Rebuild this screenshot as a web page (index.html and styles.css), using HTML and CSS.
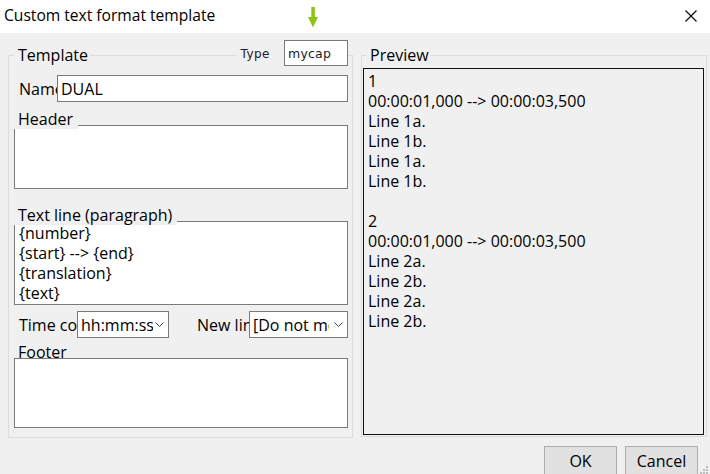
FILE: index.html
```html
<!DOCTYPE html>
<html>
<head>
<meta charset="utf-8">
<link rel="stylesheet" href="styles.css">
</head>
<body>
<div class="titlebar">
  <span class="title">Custom text format template</span>
  <svg class="marker" width="10" height="21" viewBox="0 0 10 21"><rect x="3.3" y="0" width="3.6" height="10.5" fill="#8cc414"/><polygon points="0,10 10,10 5,20.5" fill="#8cc414"/></svg>
  <svg class="close" width="12" height="12" viewBox="0 0 12 12"><path d="M0.5 0.5 L11.5 11.5 M11.5 0.5 L0.5 11.5" stroke="#000" stroke-width="1.1" fill="none"/></svg>
</div>
<div class="main">
  <div class="group left">
    <div class="group-head">
      <span class="legend">Template</span>
      <span class="type-label">Type</span>
      <div class="field type-field">mycap</div>
    </div>
    <div class="name-row">
      <span class="clip-label name-label">Name</span>
      <div class="field name-field">DUAL</div>
    </div>
    <div class="box-label header-label">Header</div>
    <div class="box header-box"></div>
    <div class="box-label textline-label">Text line (paragraph)</div>
    <div class="box textline-box">
      <div>{number}</div>
      <div>{start} --&gt; {end}</div>
      <div>{translation}</div>
      <div>{text}</div>
    </div>
    <div class="combo-row">
      <span class="clip-label time-label">Time code</span>
      <div class="combo time-combo"><span class="combo-text">hh:mm:ss,zzz</span><svg class="chev" width="9" height="5" viewBox="0 0 9 5"><path d="M0.5 0.5 L4.5 4.5 L8.5 0.5" stroke="#444" stroke-width="1" fill="none"/></svg></div>
      <span class="clip-label nl-label">New line</span>
      <div class="combo nl-combo"><span class="combo-text">[Do not modify]</span><svg class="chev" width="9" height="5" viewBox="0 0 9 5"><path d="M0.5 0.5 L4.5 4.5 L8.5 0.5" stroke="#444" stroke-width="1" fill="none"/></svg></div>
    </div>
    <div class="footer-label">Footer</div>
    <div class="box footer-box"></div>
  </div>
  <div class="group right">
    <div class="group-head">
      <span class="legend">Preview</span>
    </div>
    <div class="preview">
      <div>1</div>
      <div>00:00:01,000 --&gt; 00:00:03,500</div>
      <div>Line 1a.</div>
      <div>Line 1b.</div>
      <div>Line 1a.</div>
      <div>Line 1b.</div>
      <div>&nbsp;</div>
      <div>2</div>
      <div>00:00:01,000 --&gt; 00:00:03,500</div>
      <div>Line 2a.</div>
      <div>Line 2b.</div>
      <div>Line 2a.</div>
      <div>Line 2b.</div>
    </div>
  </div>
</div>
<div class="buttons">
  <button class="btn">OK</button>
  <button class="btn">Cancel</button>
</div>
<svg class="grip" width="9" height="9" viewBox="0 0 9 9"><rect x="6" y="1" width="2" height="2" fill="#bcbcbc"/><rect x="3" y="4" width="2" height="2" fill="#bcbcbc"/><rect x="6" y="4" width="2" height="2" fill="#bcbcbc"/><rect x="0" y="7" width="2" height="2" fill="#bcbcbc"/><rect x="3" y="7" width="2" height="2" fill="#bcbcbc"/><rect x="6" y="7" width="2" height="2" fill="#bcbcbc"/></svg>
</body>
</html>
```
FILE: styles.css
```css
* { box-sizing: border-box; }
html, body { margin: 0; padding: 0; }
body {
  width: 710px;
  height: 474px;
  overflow: hidden;
  position: relative;
  background: #f0f0f0;
  font-family: "Open Sans", "Noto Sans", sans-serif;
  font-size: 16px;
  color: #000;
}
.titlebar {
  height: 33px;
  background: #fff;
  display: flex;
  align-items: center;
  padding: 0 13px 0 4px;
  position: relative;
}
.title { font-size: 15.6px; line-height: 20px; margin-top: -3px; }
.marker { position: absolute; left: 308px; top: 7px; }
.close { margin-left: auto; margin-top: -1px; }

.main {
  display: flex;
  gap: 8px;
  padding: 22px 0 0 8px;
}
.group { border: 1px solid #dcdcdc; }
.left {
  width: 345px;
  height: 383px;
  padding: 0 4px 0 5px;
}
.right {
  width: 346px;
  height: 382px;
  padding: 0 2px 1px 1px;
  display: flex;
  flex-direction: column;
}
.group-head {
  display: flex;
  align-items: center;
  height: 26px;
  margin-top: -16px;
}
.legend {
  background: #f0f0f0;
  padding: 0 2px 0 4px;
  line-height: 20px;
  margin-top: 4px;
}
.right .legend { margin-left: 3px; }
.type-label {
  margin-left: auto;
  background: #f0f0f0;
  padding: 0 14px 0 4px;
  font-family: "DejaVu Sans", sans-serif;
  font-size: 12px;
  letter-spacing: 0.5px;
  color: #222;
  line-height: 20px;
  margin-top: 2px;
}
.field {
  background: #fff;
  border: 1px solid #7a7a7a;
  display: flex;
  align-items: center;
  white-space: nowrap;
  overflow: hidden;
}
.type-field {
  width: 64px;
  height: 26px;
  padding-left: 3px;
  font-family: "DejaVu Sans", sans-serif;
  font-size: 12.5px;
  letter-spacing: 0.2px;
  color: #222;
}
.name-row {
  display: flex;
  align-items: center;
  height: 27px;
  margin-top: 9px;
}
.clip-label {
  white-space: nowrap;
  overflow: hidden;
  line-height: 20px;
  flex: none;
}
.name-label { width: 43px; padding-left: 5px; }
.name-field {
  flex: 1;
  height: 27px;
  padding-left: 3px;
}
.box-label {
  width: fit-content;
  background: #f0f0f0;
  padding: 0 5px 0 4px;
  line-height: 20px;
  position: relative;
  z-index: 1;
}
.header-label { margin-top: 7px; }
.textline-label { margin-top: 16px; }
.box {
  background: #fff;
  border: 1px solid #7a7a7a;
  margin-top: -4px;
}
.header-box { height: 64px; }
.textline-box {
  height: 84px;
  padding: 1px 4px;
  line-height: 20px;
  overflow: hidden;
}
.combo-row {
  display: flex;
  align-items: center;
  height: 27px;
  margin-top: 6px;
}
.time-label { width: 63px; padding-left: 5px; }
.nl-label { width: 52px; margin-left: 28px; }
.combo {
  height: 27px;
  background: #fff;
  border: 1px solid #7a7a7a;
  display: flex;
  align-items: center;
  padding-left: 3px;
  flex: none;
}
.time-combo { width: 92px; }
.nl-combo { width: 99px; }
.combo-text {
  flex: 1;
  overflow: hidden;
  white-space: nowrap;
  line-height: 20px;
}
.time-combo .combo-text { margin-right: 2px; }
.nl-combo .combo-text { margin-right: 5px; }
.chev { flex: none; margin-right: 4px; }
.footer-label {
  height: 16px;
  overflow: hidden;
  line-height: 20px;
  padding-left: 4px;
  margin-top: 4px;
}
.footer-box { height: 70px; margin-top: 0; }
.preview {
  flex: 1;
  margin-top: 2px;
  border: 1px solid #111;
  padding: 2px 4px;
  line-height: 20px;
  overflow: hidden;
  background: #f0f0f0;
}
.buttons {
  display: flex;
  justify-content: flex-end;
  gap: 8px;
  padding-right: 12px;
  margin-top: 8px;
}
.btn {
  width: 73px;
  height: 30px;
  background: #e1e1e1;
  border: 1px solid #adadad;
  font-family: "Open Sans", "Noto Sans", sans-serif;
  font-size: 16px;
  color: #000;
  padding: 0;
  line-height: 20px;
}
.grip { position: absolute; right: 1px; bottom: 0; }
```
